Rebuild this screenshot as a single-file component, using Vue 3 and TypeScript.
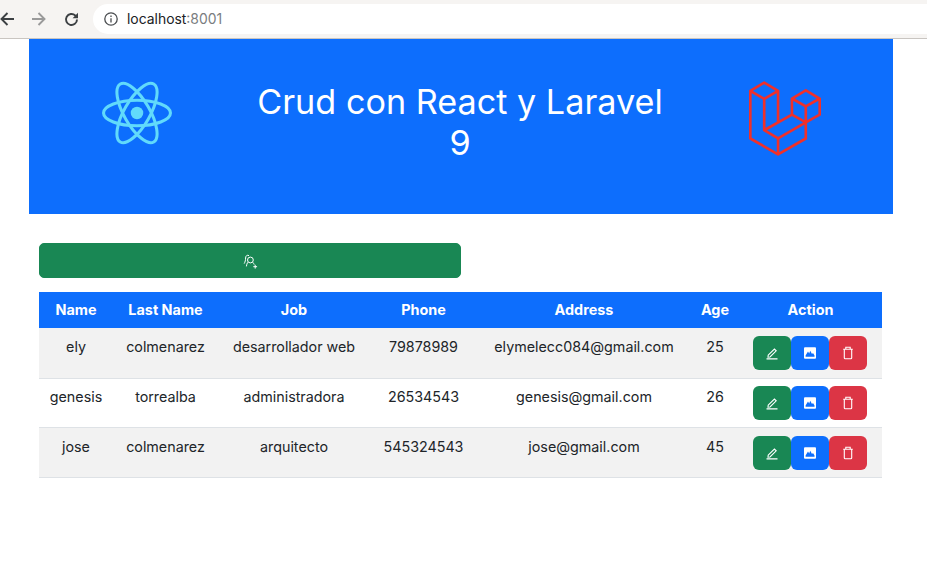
<script setup lang="ts">
interface Row { name: string; last: string; job: string; phone: string; address: string; age: number }
const rows: Row[] = [
  { name: 'ely', last: 'colmenarez', job: 'desarrollador web', phone: '79878989', address: 'elymelecc084@gmail.com', age: 25 },
  { name: 'genesis', last: 'torrealba', job: 'administradora', phone: '26534543', address: 'genesis@gmail.com', age: 26 },
  { name: 'jose', last: 'colmenarez', job: 'arquitecto', phone: '545324543', address: 'jose@gmail.com', age: 45 },
]
const heads = ['Name', 'Last Name', 'Job', 'Phone', 'Address', 'Age', 'Action']
const widths = [74, 105, 152, 107, 214, 48, 143]
</script>

<template>
  <div class="page">
    <div class="chrome">
      <svg class="nav back" width="14" height="14" viewBox="0 0 14 14"><path d="M14 7H1.5M7.5 1L1.5 7l6 6" /></svg>
      <svg class="nav fwd" width="14" height="14" viewBox="0 0 14 14"><path d="M0 7h12.5M6.5 1l6 6-6 6" /></svg>
      <svg class="nav reload" width="15" height="15" viewBox="0 0 15 15"><path d="M13 7.5a5.5 5.5 0 1 1-1.7-4L13 5" /><path class="fill" d="M14 0.8v5.4H8.6z" /></svg>
      <div class="omnibox">
        <svg width="14" height="14" viewBox="0 0 14 14" class="info"><circle cx="7" cy="7" r="6.2" /><path d="M7 6.2v4.2M7 3.6v1.5" /></svg>
        <span class="host">localhost</span><span class="port">:8001</span>
      </div>
    </div>

    <main class="container">
      <header class="hero">
        <div class="side">
          <svg class="react" width="70" height="64" viewBox="-11.5 -10.5 23 21">
            <circle r="2.05" fill="#61dafb" />
            <g fill="none" stroke="#61dafb" stroke-width="1">
              <ellipse rx="11" ry="4.2" />
              <ellipse rx="11" ry="4.2" transform="rotate(60)" />
              <ellipse rx="11" ry="4.2" transform="rotate(120)" />
            </g>
          </svg>
        </div>
        <h1 class="title">Crud con React y Laravel 9</h1>
        <div class="side">
          <svg class="laravel" width="72" height="75" viewBox="86 64 218 225">
            <path d="M132 68L90 93L132 117L174 93ZM90 93V237L174 285L258 237V188M132 117V212L174 237L258 188M174 237V285M174 93V190M132 212L216 165M258 91L216 116L258 140L300 116ZM216 116V165L258 188L300 165V116M258 140V188" />
          </svg>
        </div>
      </header>

      <section class="content">
        <button class="add" type="button" aria-label="Add">
          <svg width="15" height="15" viewBox="0 0 15 15"><circle cx="7.4" cy="6" r="2.9" /><path d="M6 1.600C4 .6 2.600 2 2.600 4c0 2.200-.4 3.800-1.400 5.600M4.600 8.400C4 9.600 3.600 10.800 3.400 12.400M9.800 8.300c.7.8 1.100 1.500 1.400 2.300M12.200 10.800v3.800M10.300 12.700h3.800" /></svg>
        </button>

        <table class="grid">
          <colgroup>
            <col v-for="w in widths" :key="w" :style="{ width: w + 'px' }" />
          </colgroup>
          <thead>
            <tr><th v-for="h in heads" :key="h">{{ h }}</th></tr>
          </thead>
          <tbody>
            <tr v-for="r in rows" :key="r.name">
              <td>{{ r.name }}</td>
              <td>{{ r.last }}</td>
              <td>{{ r.job }}</td>
              <td>{{ r.phone }}</td>
              <td>{{ r.address }}</td>
              <td>{{ r.age }}</td>
              <td class="act-cell">
                <div class="actions">
                  <button class="act green" type="button" aria-label="Edit">
                    <svg width="14" height="14" viewBox="0 0 14 14"><path d="M3.200 9.200L9.400 3l1.800 1.800-6.200 6.200-2 .2zM1.500 12.900h11" /></svg>
                  </button>
                  <button class="act blue" type="button" aria-label="Image">
                    <svg width="14" height="14" viewBox="0 0 14 14"><rect x="1" y="1.200" width="12" height="11.600" rx="1" fill="#fff" stroke="none" /><path fill="#0d6efd" stroke="none" d="M2.600 10.800V9.600L5 5.400 6.200 7.600 7.200 4.800 9 8 10 7l1.500 2.600v1.200z" /></svg>
                  </button>
                  <button class="act red" type="button" aria-label="Delete">
                    <svg width="14" height="14" viewBox="0 0 14 14"><path d="M2.200 3.300h9.600M4.800 3.300V1.300h4.400v2M3.300 3.300V12c0 .5.300.800.800.800h5.800c.5 0 .8-.3.800-.8V3.300" /></svg>
                  </button>
                </div>
              </td>
            </tr>
          </tbody>
        </table>
      </section>
    </main>
  </div>
</template>

<style>
html, body { background: #fff; overflow: hidden; }
</style>

<style scoped>
.page { font-family: Inter, "Liberation Sans", sans-serif; color: #212529; font-optical-sizing: none; }
.chrome {
  height: 38px; box-sizing: content-box; background: #f6f4f2; border-bottom: 1px solid #c9c5c1;
  display: flex; align-items: center; overflow: hidden;
}
.nav { flex: none; fill: none; stroke-width: 1.9; }
.nav .fill { fill: #3c4043; stroke: none; }
.back { stroke: #3c4043; margin-left: 0; }
.fwd { stroke: #9a9a9a; margin-left: 18px; }
.reload { stroke: #3c4043; margin-left: 18px; }
.omnibox {
  flex: 1; margin: 0 -20px 0 14px; height: 30px; background: #fff; border-radius: 15px;
  display: flex; align-items: center; padding-left: 11px; font-size: 13.9px; white-space: nowrap;
}
.info { fill: none; stroke: #4a4d50; stroke-width: 1.3; margin-right: 9px; }
.host { color: #202124; }
.port { color: #7a7d80; }
.container { width: 864px; margin-left: 29px; }
.hero {
  height: 175px; box-sizing: border-box; background: #0d6efd; color: #fff;
  display: grid; grid-template-columns: 216px 432px 216px; padding-top: 42px;
}
.side { display: flex; justify-content: center; align-items: flex-start; }
.laravel { fill: none; stroke: #f0302a; stroke-width: 8; stroke-linejoin: round; }
.title {
  margin: 0; padding: 0 13px 0 11px; font-size: 34.2px; font-weight: 400; line-height: 41px; text-align: center;
}
.content { padding: 29px 11px 0 10px; }
.add {
  display: flex; align-items: center; justify-content: center; width: 422px; height: 35px; padding: 0;
  background: #198754; border: 1px solid #198754; border-radius: 5px;
}
.add svg { fill: none; stroke: #fff; stroke-width: 1; position: relative; top: 1px; }
.grid {
  width: 843px; margin-top: 14px; border-collapse: collapse; table-layout: fixed; font-size: 14.3px; line-height: 24px;
}
th { height: 36px; padding: 0 8px; background: #0d6efd; color: #fff; font-weight: 700; font-size: 14.4px; text-align: center; vertical-align: middle; }
td { padding: 7px 8px; text-align: center; vertical-align: top; border-bottom: 1px solid #dee2e6; }
tbody tr:nth-child(2) td { padding-top: 6px; }
tbody tr:nth-child(odd) td { background: #f2f2f2; }
td.act-cell { padding: 8px 9px 7px 8px; }
tbody tr:nth-child(1) td.act-cell { padding-bottom: 8px; }
tbody tr:nth-child(2) td.act-cell { padding-top: 7px; }
.actions { display: flex; justify-content: center; }
.act {
  width: 38px; height: 34px; padding: 0; border: 0; border-radius: 6px;
  display: flex; align-items: center; justify-content: center;
}
.act svg { fill: none; stroke: #fff; stroke-width: 1.1; }
.green { background: #198754; }
.blue { background: #0d6efd; }
.red { background: #dc3545; }
</style>
